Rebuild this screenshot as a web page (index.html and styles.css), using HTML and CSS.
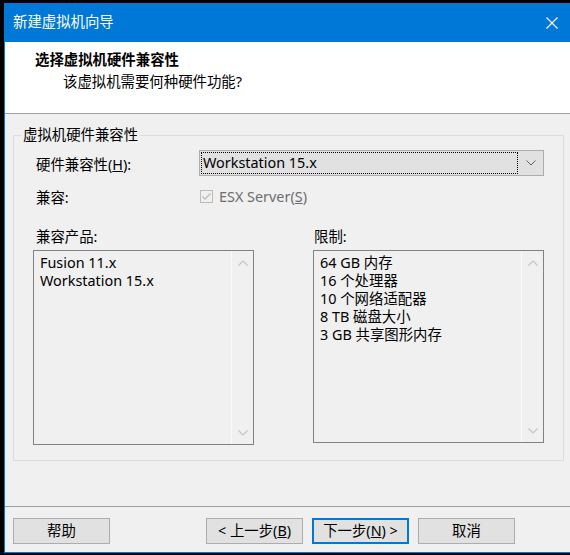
FILE: index.html
```html
<!DOCTYPE html>
<html lang="zh-CN">
<head>
    <meta charset="UTF-8">
    <title>新建虚拟机向导</title>
    <link rel="stylesheet" href="styles.css">
</head>
<body>

    <div class="window">
        <div class="titlebar">
            <span class="caption">新建虚拟机向导</span>
            <svg class="close" width="12" height="12" viewBox="0 0 12 12">
                <path d="M0.5 0.5 L11.5 11.5 M11.5 0.5 L0.5 11.5" stroke="#fff" stroke-width="1.1" fill="none"/>
            </svg>
        </div>

        <div class="header">
            <div class="heading">选择虚拟机硬件兼容性</div>
            <div class="subheading">该虚拟机需要何种硬件功能?</div>
        </div>

        <div class="content">
            <fieldset class="group">
                <legend>虚拟机硬件兼容性</legend>

                <div class="row row-combo">
                    <label class="row-label">硬件兼容性(<u>H</u>):</label>
                    <div class="combo">
                        <div class="combo-value">Workstation 15.x</div>
                        <div class="combo-arrow">
                            <svg width="10" height="6" viewBox="0 0 10 6">
                                <path d="M0.5 0.5 L5 5 L9.5 0.5" stroke="#606060" stroke-width="1" fill="none"/>
                            </svg>
                        </div>
                    </div>
                </div>

                <div class="row row-check">
                    <label class="row-label">兼容:</label>
                    <div class="checkbox">
                        <svg width="11" height="11" viewBox="0 0 11 11">
                            <path d="M1.5 5.5 L4 8 L9.5 2.5" stroke="#bcbcbc" stroke-width="1.3" fill="none"/>
                        </svg>
                    </div>
                    <span class="check-text">ESX Server(<u>S</u>)</span>
                </div>

                <div class="lists">
                    <div class="list-col">
                        <div class="list-label">兼容产品:</div>
                        <div class="listbox listbox-left">
                            <div class="list-items">
                                <div>Fusion 11.x</div>
                                <div>Workstation 15.x</div>
                            </div>
                            <div class="scrollbar">
                                <svg width="10" height="6" viewBox="0 0 10 6"><path d="M0.5 5.5 L5 1 L9.5 5.5" stroke="#c4c4c4" stroke-width="1.2" fill="none"/></svg>
                                <svg width="10" height="6" viewBox="0 0 10 6"><path d="M0.5 0.5 L5 5 L9.5 0.5" stroke="#c4c4c4" stroke-width="1.2" fill="none"/></svg>
                            </div>
                        </div>
                    </div>
                    <div class="list-col">
                        <div class="list-label">限制:</div>
                        <div class="listbox listbox-right">
                            <div class="list-items">
                                <div>64 GB 内存</div>
                                <div>16 个处理器</div>
                                <div>10 个网络适配器</div>
                                <div>8 TB 磁盘大小</div>
                                <div>3 GB 共享图形内存</div>
                            </div>
                            <div class="scrollbar">
                                <svg width="10" height="6" viewBox="0 0 10 6"><path d="M0.5 5.5 L5 1 L9.5 5.5" stroke="#c4c4c4" stroke-width="1.2" fill="none"/></svg>
                                <svg width="10" height="6" viewBox="0 0 10 6"><path d="M0.5 0.5 L5 5 L9.5 0.5" stroke="#c4c4c4" stroke-width="1.2" fill="none"/></svg>
                            </div>
                        </div>
                    </div>
                </div>
            </fieldset>
        </div>

        <div class="footer">
            <button class="btn">帮助</button>
            <div class="nav">
                <button class="btn">&lt; 上一步(<u>B</u>)</button>
                <button class="btn btn-default">下一步(<u>N</u>) &gt;</button>
                <button class="btn">取消</button>
            </div>
        </div>
    </div>

</body>
</html>
```

FILE: styles.css
```css
body {
    margin: 0;
    background-color: black;
    font-family: "Noto Sans", "Noto Sans CJK SC", sans-serif;
    font-size: 14.4px;
    color: black;
    overflow: hidden;
}

.window {
    margin: 3px 0 0 4px;
    width: 566px;
    height: 550px;
    border-left: 1px solid #0078d7;
    border-bottom: 1px solid #0078d7;
    background: #f0f0f0;
    display: flex;
    flex-direction: column;
    box-sizing: border-box;
    overflow: hidden;
}

/* 제목 표시줄 */
.titlebar {
    height: 39px;
    flex: none;
    background: #0078d7;
    color: white;
    display: flex;
    align-items: center;
    padding-left: 8px;
}

.caption {
    line-height: 18px;
    padding-bottom: 1px;
}

.close {
    margin-left: auto;
    margin-right: 12px;
}

.header {
    height: 71px;
    flex: none;
    background: white;
    border-bottom: 1px solid #a0a0a0;
    box-sizing: content-box;
}

.heading {
    font-weight: bold;
    line-height: 18px;
    padding: 9px 0 0 30px;
}

.subheading {
    line-height: 18px;
    margin-top: 4px;
    padding-left: 58px;
}

.content {
    height: 392px;
    flex: none;
    padding: 12px 0 0 8px;
    box-sizing: border-box;
}

.group {
    width: 551px;
    height: 335px;
    box-sizing: border-box;
    margin: 0;
    padding: 6px 0 0 0;
    border: 1px solid #dcdcdc;
    min-inline-size: 0;
}

.group legend {
    margin-left: 7px;
    padding: 0 2px;
    line-height: 18px;
}

.row {
    display: flex;
    align-items: center;
    padding-left: 22px;
}

.row-label {
    width: 163px;
    flex: none;
}

.row-combo {
    height: 26px;
}

.row-check {
    height: 22px;
    margin-top: 9px;
}

/* 콤보 박스 */
.combo {
    width: 345px;
    height: 26px;
    box-sizing: border-box;
    border: 1px solid #adadad;
    background: #e1e1e1;
    padding: 1px;
    display: flex;
}

.combo-value {
    flex: 1;
    border: 1px dotted black;
    padding-left: 1px;
    line-height: 20px;
}

.combo-arrow {
    width: 22px;
    display: flex;
    align-items: center;
    justify-content: center;
    padding-left: 2px;
}

.checkbox {
    width: 13px;
    height: 13px;
    box-sizing: border-box;
    border: 1px solid #bcbcbc;
    background: #f0f0f0;
    margin-left: 1px;
    display: flex;
    align-items: center;
    justify-content: center;
}

.check-text {
    color: #6d6d6d;
    margin-left: 6px;
}

/* 목록 */
.lists {
    display: flex;
    gap: 59px;
    padding-left: 19px;
    margin-top: 21px;
}

.list-label {
    line-height: 18px;
    padding-left: 3px;
    margin-bottom: 4px;
}

.list-col:last-child .list-label {
    padding-left: 1px;
}

.listbox {
    border: 1px solid #828282;
    box-sizing: border-box;
    display: flex;
    background: #f0f0f0;
}

.listbox-left {
    width: 221px;
    height: 195px;
}

.listbox-right {
    width: 231px;
    height: 193px;
}

.list-items {
    flex: 1;
    padding: 3px 0 0 6px;
    line-height: 18px;
}

.scrollbar {
    width: 21px;
    border-left: 1px solid #fafafa;
    display: flex;
    flex-direction: column;
    align-items: center;
    justify-content: space-between;
    padding: 9px 0 8px;
}

/* 하단 버튼 */
.footer {
    height: 46px;
    flex: none;
    border-top: 1px solid #a0a0a0;
    display: flex;
    align-items: flex-start;
    padding: 11px 0 0 8px;
    box-sizing: content-box;
}

.nav {
    display: flex;
    gap: 9px;
    margin-left: 96px;
}

.btn {
    width: 97px;
    height: 26px;
    flex: none;
    box-sizing: border-box;
    border: 1px solid #adadad;
    background: #e1e1e1;
    font-family: inherit;
    font-size: 14.4px;
    color: black;
    padding: 0;
    line-height: 18px;
}

.btn-default {
    border: 2px solid #0078d7;
}
```
